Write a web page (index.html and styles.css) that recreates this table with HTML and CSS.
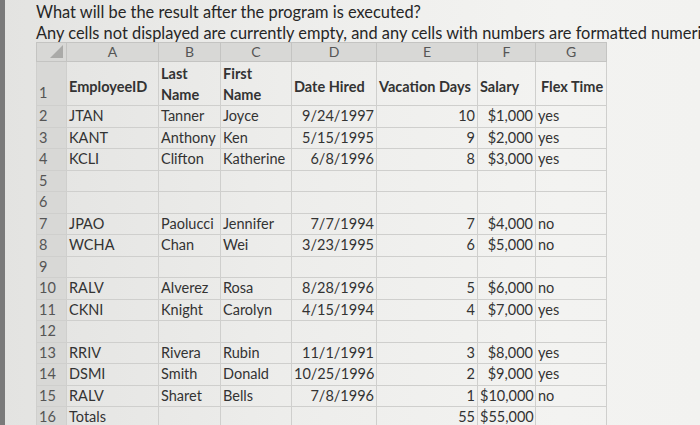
FILE: index.html
```html
<!DOCTYPE html>
<html>
<head>
<meta charset="utf-8">
<link rel="stylesheet" href="styles.css">
</head>
<body>
<div class="screen">
  <div class="bezel"></div>
  <div class="content">
    <p class="q">What will be the result after the program is executed?</p>
    <p class="q q2">Any cells not displayed are currently empty, and any cells with numbers are formatted numerically</p>
    <table class="sheet">
      <colgroup>
        <col class="c-rn"><col class="c-a"><col class="c-b"><col class="c-c"><col class="c-d"><col class="c-e"><col class="c-f"><col class="c-g">
      </colgroup>
      <thead>
        <tr class="colhead">
          <th class="corner"><span class="tri"></span></th><th>A</th><th>B</th><th>C</th><th>D</th><th>E</th><th>F</th><th>G</th>
        </tr>
      </thead>
      <tbody>
        <tr class="r1">
          <td class="rn">1</td>
          <td class="b mid">EmployeeID</td>
          <td class="b wrap">Last<br>Name</td>
          <td class="b wrap">First<br>Name</td>
          <td class="b mid">Date Hired</td>
          <td class="b mid">Vacation Days</td>
          <td class="b mid">Salary</td>
          <td class="b mid fx">Flex Time</td>
        </tr>
        <tr><td class="rn">2</td><td>JTAN</td><td>Tanner</td><td>Joyce</td><td class="r">9/24/1997</td><td class="r">10</td><td class="r">$1,000</td><td>yes</td></tr>
        <tr><td class="rn">3</td><td>KANT</td><td>Anthony</td><td>Ken</td><td class="r">5/15/1995</td><td class="r">9</td><td class="r">$2,000</td><td>yes</td></tr>
        <tr><td class="rn">4</td><td>KCLI</td><td>Clifton</td><td>Katherine</td><td class="r">6/8/1996</td><td class="r">8</td><td class="r">$3,000</td><td>yes</td></tr>
        <tr><td class="rn">5</td><td></td><td></td><td></td><td></td><td></td><td></td><td></td></tr>
        <tr><td class="rn">6</td><td></td><td></td><td></td><td></td><td></td><td></td><td></td></tr>
        <tr><td class="rn">7</td><td>JPAO</td><td>Paolucci</td><td>Jennifer</td><td class="r">7/7/1994</td><td class="r">7</td><td class="r">$4,000</td><td>no</td></tr>
        <tr><td class="rn">8</td><td>WCHA</td><td>Chan</td><td>Wei</td><td class="r">3/23/1995</td><td class="r">6</td><td class="r">$5,000</td><td>no</td></tr>
        <tr><td class="rn">9</td><td></td><td></td><td></td><td></td><td></td><td></td><td></td></tr>
        <tr><td class="rn">10</td><td>RALV</td><td>Alverez</td><td>Rosa</td><td class="r">8/28/1996</td><td class="r">5</td><td class="r">$6,000</td><td>no</td></tr>
        <tr><td class="rn">11</td><td>CKNI</td><td>Knight</td><td>Carolyn</td><td class="r">4/15/1994</td><td class="r">4</td><td class="r">$7,000</td><td>yes</td></tr>
        <tr><td class="rn">12</td><td></td><td></td><td></td><td></td><td></td><td></td><td></td></tr>
        <tr><td class="rn">13</td><td>RRIV</td><td>Rivera</td><td>Rubin</td><td class="r">11/1/1991</td><td class="r">3</td><td class="r">$8,000</td><td>yes</td></tr>
        <tr><td class="rn">14</td><td>DSMI</td><td>Smith</td><td>Donald</td><td class="r">10/25/1996</td><td class="r">2</td><td class="r">$9,000</td><td>yes</td></tr>
        <tr><td class="rn">15</td><td>RALV</td><td>Sharet</td><td>Bells</td><td class="r">7/8/1996</td><td class="r">1</td><td class="r">$10,000</td><td>no</td></tr>
        <tr><td class="rn">16</td><td>Totals</td><td></td><td></td><td></td><td class="r">55</td><td class="r">$55,000</td><td></td></tr>
      </tbody>
    </table>
  </div>
</div>
</body>
</html>
```

FILE: styles.css
```css
html, body {
  margin: 0;
  padding: 0;
}
body {
  width: 700px;
  height: 425px;
  overflow: hidden;
  font-family: Lato, "Open Sans", sans-serif;
  color: #2e2e2e;
}
.screen {
  display: flex;
  width: 700px;
  height: 425px;
  overflow: hidden;
  background: linear-gradient(90deg, #e3e3e1 0%, #ededeb 40%, #f3f3f1 80%, #f2f2f0 100%);
}
.bezel {
  flex: 0 0 5px;
  background: #7a7a7a;
}
.content {
  flex: 1;
  padding-left: 31px;
  min-width: 0;
  white-space: nowrap;
  overflow: hidden;
}
.q {
  margin: 0;
  font-size: 16.4px;
  line-height: 20px;
  color: #262626;
}
.q:first-child {
  padding-top: 2px;
}
.q2 {
  line-height: 20px;
  padding-top: 1px;
  margin-bottom: -1px;
}
.sheet {
  border-collapse: collapse;
  table-layout: fixed;
  width: 570px;
  font-size: 14.5px;
  color: #333;
}
.c-rn { width: 30px; }
.c-a { width: 92px; }
.c-b { width: 62px; }
.c-c { width: 71px; }
.c-d { width: 85px; }
.c-e { width: 101px; }
.c-f { width: 58px; }
.c-g { width: 71px; }
.sheet th, .sheet td {
  border: 1px solid #cfcfcd;
  padding: 0 2px;
  line-height: 18px;
  overflow: hidden;
  white-space: nowrap;
}
.sheet tbody tr {
  height: 21.5px;
}
.colhead {
  height: 19px;
}
.colhead th {
  background: #d8d8d6;
  font-weight: normal;
  color: #555;
  text-align: center;
  line-height: 16px;
  font-size: 14px;
  border-color: #c4c4c2;
}
.corner {
  position: relative;
}
.tri {
  position: absolute;
  right: 3px;
  bottom: 3px;
  width: 0;
  height: 0;
  border-left: 13px solid transparent;
  border-bottom: 13px solid #aaaaa8;
}
.rn {
  background: #d8d8d6;
  color: #555;
  padding-left: 3px;
  border-color: #c4c4c2;
}
.sheet tbody tr.r1 {
  height: 44px;
}
.sheet .r1 .rn {
  vertical-align: bottom;
  padding-bottom: 3px;
}
.b {
  font-weight: bold;
  color: #333;
}
.sheet .mid {
  vertical-align: middle;
  padding-top: 6px;
}
.sheet .wrap {
  line-height: 21px;
  vertical-align: middle;
}
.sheet .fx {
  padding-left: 5px;
}
.r {
  text-align: right;
}
```
